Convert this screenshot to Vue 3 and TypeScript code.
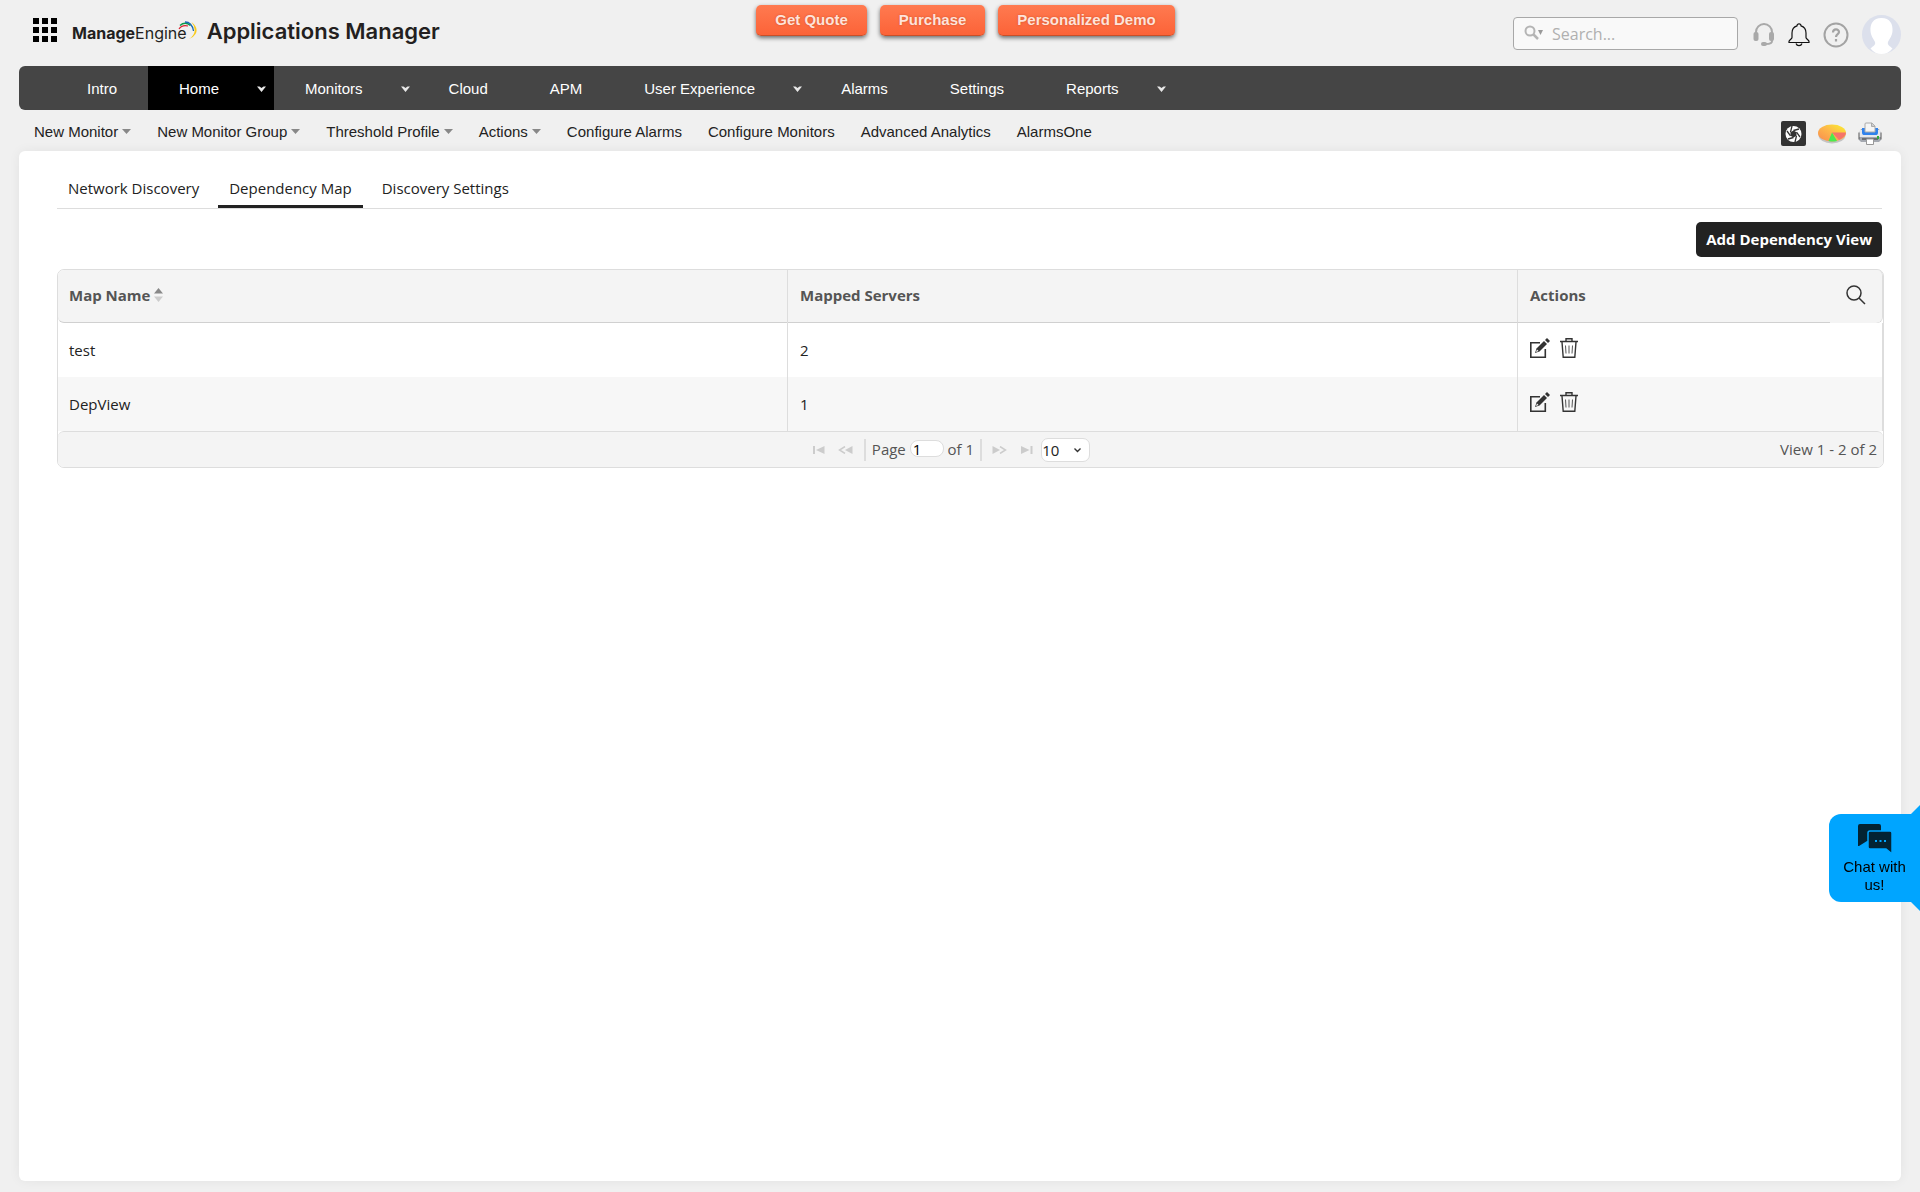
<script setup lang="ts">
import { ref } from 'vue'

interface NavItem { label: string; menu?: boolean; active?: boolean }

const promos: string[] = ['Get Quote', 'Purchase', 'Personalized Demo']
const nav: NavItem[] = [
  { label: 'Intro' },
  { label: 'Home', menu: true, active: true },
  { label: 'Monitors', menu: true },
  { label: 'Cloud' },
  { label: 'APM' },
  { label: 'User Experience', menu: true },
  { label: 'Alarms' },
  { label: 'Settings' },
  { label: 'Reports', menu: true },
]
const subnav: NavItem[] = [
  { label: 'New Monitor', menu: true },
  { label: 'New Monitor Group', menu: true },
  { label: 'Threshold Profile', menu: true },
  { label: 'Actions', menu: true },
  { label: 'Configure Alarms' },
  { label: 'Configure Monitors' },
  { label: 'Advanced Analytics' },
  { label: 'AlarmsOne' },
]
const tabs: string[] = ['Network Discovery', 'Dependency Map', 'Discovery Settings']
const activeTab = ref('Dependency Map')
const maps = [
  { name: 'test', servers: 2 },
  { name: 'DepView', servers: 1 },
]
const query = ref('')
const page = ref('1')
const pageSize = ref('10')
</script>

<template>
  <div class="app">
    <header class="top">
      <div class="brand">
        <button class="plain" aria-label="Applications">
          <svg width="25" height="25" viewBox="0 0 25 25">
            <template v-for="r in 3" :key="r">
              <rect v-for="c in 3" :key="c" :x="(c - 1) * 9" :y="(r - 1) * 9" width="6" height="6" fill="#000" />
            </template>
          </svg>
        </button>
        <a href="#" class="logo">
          <span class="maker"><b>Manage</b>Engine</span>
          <svg class="swoosh" width="20" height="20" viewBox="0 0 20 20" fill="none">
            <path d="M1 9Q4 4.500 10 6" stroke="#d9202e" stroke-width="1.200" />
            <path d="M2 5.500Q7 1 12.500 5.500" stroke="#0a9a4a" stroke-width="1.600" />
            <path d="M7 2Q14 2 15.500 11" stroke="#1668b3" stroke-width="1.300" />
            <path d="M13.500 2Q21 8 17.500 14Q15.500 17.500 11 19Q15.500 16 16.500 12Q17.500 7 13.500 2" fill="#f8cb1c" />
          </svg>
          <span class="product">Applications Manager</span>
        </a>
      </div>
      <div class="promos">
        <button v-for="p in promos" :key="p" class="promo">{{ p }}</button>
      </div>
      <div class="tools">
        <label class="search">
          <svg width="20" height="17" viewBox="0 0 20 17" fill="none">
            <circle cx="6" cy="6" r="4.500" stroke="#b5b5b5" stroke-width="2" />
            <path d="M9.500 9.500L14 14" stroke="#b5b5b5" stroke-width="2.500" />
            <path d="M14 5h5l-2.500 5z" fill="#999" />
          </svg>
          <input v-model="query" type="text" placeholder="Search..." aria-label="Search" />
        </label>
        <button class="plain" aria-label="Support">
          <svg width="22" height="24" viewBox="0 0 22 24" fill="none">
            <path d="M3 10V9a8 8 0 0 1 16 0v1M19 16v2q0 3-6 3" stroke="#a9a9a9" stroke-width="2" />
            <rect x="0.500" y="9" width="5" height="9" rx="2" fill="#a9a9a9" />
            <rect x="16" y="9" width="5" height="9" rx="2" fill="#a9a9a9" />
            <rect x="8" y="19" width="6" height="4" rx="2" fill="#a9a9a9" />
          </svg>
        </button>
        <button class="plain" aria-label="Notifications">
          <svg width="22" height="24" viewBox="0 0 22 24" fill="none" stroke="#111" stroke-width="1.200">
            <path d="M9 2.800a2 2 0 0 1 4 0c3.500 1 5 4 5 7.200v4.500c0 1.500 3 2.500 3 4v1H1v-1c0-1.500 3-2.500 3-4V10c0-3.200 1.500-6.200 5-7.200z" />
            <path d="M8 20.500c1 2.800 5 2.800 6 0" />
          </svg>
        </button>
        <button class="plain" aria-label="Help">
          <svg width="26" height="26" viewBox="0 0 26 26" fill="none" stroke="#a3a3a3">
            <circle cx="13" cy="13" r="11.500" stroke-width="2" />
            <path d="M10 10.500c0-4 6-4 6-.5 0 2.200-3 2-3 5M13 17v2.500" stroke-width="2.200" />
          </svg>
        </button>
        <button class="plain" aria-label="Account">
          <svg width="39" height="39" viewBox="0 0 39 39">
            <circle cx="19.500" cy="19.500" r="19.500" fill="#dce0ec" />
            <path d="M19.500 3C11 3 8 9 8.500 16c.4 5 2.500 7 4.500 11 1 3-2 4-4.500 6.500Q13 39 19.500 39t11-5.500C28 31 25 30 26 27c2-4 4.100-6 4.500-11C31 9 28 3 19.500 3z" fill="#fff" />
          </svg>
        </button>
      </div>
    </header>

    <nav class="nav">
      <a v-for="n in nav" :key="n.label" href="#" :class="{ active: n.active, menu: n.menu }">
        {{ n.label }}
        <svg v-if="n.menu" width="9" height="6" viewBox="0 0 9 6"><path d="M0 .5h2.500L4.500 2 6.500 .5H9L4.500 6z" fill="#e8e8e8" /></svg>
      </a>
    </nav>

    <div class="sub">
      <a v-for="s in subnav" :key="s.label" href="#">{{ s.label }}<svg v-if="s.menu" width="9" height="5" viewBox="0 0 9 5"><path d="M0 0h9L4.500 5z" fill="#888" /></svg></a>
      <div class="shortcuts">
        <button class="plain" aria-label="Snapshot">
          <svg width="25" height="25" viewBox="0 0 25 25">
            <rect width="25" height="25" rx="2" fill="#333" />
            <circle cx="12.500" cy="13" r="8" fill="#fff" />
            <path d="M12.500 9.500l3 1.700v3.600l-3 1.700-3-1.700v-3.600z" fill="#333" />
            <path d="M12.500 9.500L18 8M15.500 11.200L19 16M15.500 14.800L14 21M12.500 16.500L7 18M9.500 14.800L6 10M9.500 11.200L11 5" stroke="#333" stroke-width="1.300" />
          </svg>
        </button>
        <button class="plain" aria-label="Reports">
          <svg width="28" height="20" viewBox="0 0 28 20">
            <defs>
              <linearGradient id="pieFill" x1="0" y1="1" x2="1" y2="0">
                <stop offset="0" stop-color="#f98a4e" /><stop offset=".5" stop-color="#fdb64b" /><stop offset="1" stop-color="#fbf22e" />
              </linearGradient>
            </defs>
            <ellipse cx="14" cy="11" rx="13.500" ry="8.500" fill="#c4c4c4" />
            <ellipse cx="14" cy="9" rx="14" ry="8.500" fill="url(#pieFill)" />
            <path d="M14 8.500h14q0 4-7 7.500z" fill="#f5756a" />
            <path d="M14 8.500L10.500 17q4 1 8.500 0z" fill="#4bea4f" />
          </svg>
        </button>
        <button class="plain" aria-label="Print">
          <svg width="24" height="24" viewBox="0 0 24 24">
            <path d="M3 7h18l2 4v7l-2 2H3l-2-2v-7z" fill="#a4a8b0" />
            <path d="M2 8h3v5h14V8h3l1 3v4H1v-4z" fill="#e6e8ec" />
            <path d="M1 10.500v7M23 10.500v7" stroke="#555" />
            <path d="M4 6h3v4h10V6h3v5q0 2-2 2H6q-2 0-2-2z" fill="#2f82ee" />
            <path d="M7 2q0-1 1-1h6l3 3v6H7z" fill="#f5f5f5" stroke="#aaa" />
            <path d="M13.500 1v3.500H17" fill="#ccc" stroke="#aaa" />
            <path d="M4 16h16v2H4z" fill="#6c6f75" />
            <path d="M8.500 17h7v5.500h-7z" fill="#fff" stroke="#999" />
            <rect x="19" y="14" width="2" height="3" fill="#2fae3f" />
          </svg>
        </button>
      </div>
    </div>

    <main class="panel">
      <div class="tabs" role="tablist">
        <button v-for="t in tabs" :key="t" role="tab" :class="{ on: t === activeTab }" @click="activeTab = t">{{ t }}</button>
      </div>
      <div class="bar"><button class="add">Add Dependency View</button></div>

      <div class="grid">
        <table>
          <thead>
            <tr>
              <th>
                Map Name
                <svg width="9" height="14" viewBox="0 0 9 14"><path d="M0 5.500h9L4.500 0z" fill="#888" /><path d="M0 8.500h9L4.500 14z" fill="#ccc" /></svg>
              </th>
              <th>Mapped Servers</th>
              <th class="last">
                Actions
                <button class="find" aria-label="Search maps">
                  <svg width="20" height="20" viewBox="0 0 20 20" fill="none" stroke="#333" stroke-width="1.500"><circle cx="8" cy="8" r="7" /><path d="M13 13l6 6" /></svg>
                </button>
              </th>
            </tr>
          </thead>
          <tbody>
            <tr v-for="m in maps" :key="m.name">
              <td>{{ m.name }}</td>
              <td>{{ m.servers }}</td>
              <td>
                <div class="acts">
                  <button class="plain" :aria-label="'Edit ' + m.name">
                    <svg width="20" height="20" viewBox="0 0 20 20">
                      <path d="M10 4.700H.8v14.500h14.500V11" fill="none" stroke="#333" stroke-width="1.600" />
                      <path d="M5 15l1.500-4.500L14 3l3 3-7.500 7.500z" fill="#333" />
                      <path d="M15 2l2-2 3 3-2 2z" fill="#333" />
                      <path d="M6 14l1-2.500 1.500 1.500z" fill="#fff" />
                    </svg>
                  </button>
                  <button class="plain" :aria-label="'Delete ' + m.name">
                    <svg width="18" height="20" viewBox="0 0 18 20" fill="none" stroke="#333">
                      <path d="M0 3.500h18M6 3V.700h6V3" stroke-width="1.400" />
                      <path d="M2 4l1.200 15.200h11.600L16 4" stroke-width="1.400" />
                      <path d="M5.500 7.500l.5 8M9 7.500v8M12.500 7.500l-.5 8" stroke-width="1" stroke="#555" />
                    </svg>
                  </button>
                </div>
              </td>
            </tr>
          </tbody>
        </table>
        <div class="pager">
          <div class="controls">
            <button class="plain" aria-label="First page"><svg width="12" height="8" viewBox="0 0 12 8"><path d="M0 0h2v8H0zM11.500 0v8L3 4z" fill="#ccc" /></svg></button>
            <button class="plain prev" aria-label="Previous page"><svg width="15" height="8" viewBox="0 0 15 8"><path d="M14.500 0v8L7 4z" fill="#ccc" /><path d="M7 .5L1.500 4 7 7.500" fill="none" stroke="#ccc" stroke-width="1.500" /></svg></button>
            <i class="sep"></i>
            <label class="page">Page <input v-model="page" type="text" /> of 1</label>
            <i class="sep"></i>
            <button class="plain next" aria-label="Next page"><svg width="15" height="8" viewBox="0 0 15 8"><path d="M.5 0v8L8 4z" fill="#ccc" /><path d="M8 .5L13.500 4 8 7.500" fill="none" stroke="#ccc" stroke-width="1.500" /></svg></button>
            <button class="plain" aria-label="Last page"><svg width="12" height="8" viewBox="0 0 12 8"><path d="M9.500 0h2v8h-2zM0 0v8l8.500-4z" fill="#ccc" /></svg></button>
            <span class="size">
              <select v-model="pageSize" aria-label="Rows per page"><option>10</option><option>25</option><option>50</option></select>
              <svg width="7" height="5" viewBox="0 0 7 5" fill="none"><path d="M.5 .5l3 3 3-3" stroke="#333" stroke-width="1.400" /></svg>
            </span>
          </div>
          <div class="count">View 1 - 2 of 2</div>
        </div>
      </div>
    </main>

    <button class="chat">
      <svg width="34" height="30" viewBox="0 0 34 30">
        <path d="M2 0h19q2 0 2 2v15H9l-8 5H0V2q0-2 2-2z" fill="#032333" />
        <path d="M12 7h20q2 0 2 2v20h-1l-5-4H12q-2 0-2-2V9q0-2 2-2z" fill="#032333" stroke="#00a5ff" stroke-width="1.500" />
        <path d="M17 16h2v2h-2zM21.500 16h2v2h-2zM26 16h2v2h-2z" fill="#00a5ff" />
      </svg>
      <span>Chat with us!</span>
    </button>
  </div>
</template>

<style>
body {
  margin: 0;
  background: #f0f0f0;
}
</style>

<style scoped>
.app {
  box-sizing: border-box;
  min-height: 100vh;
  padding: 0 19px 11px;
  display: flex;
  flex-direction: column;
  font: 15px/20px "Open Sans", "Noto Sans", sans-serif;
  color: #222;
}
a {
  color: inherit;
  text-decoration: none;
}
button {
  font: inherit;
  color: inherit;
  cursor: pointer;
}
svg {
  display: block;
  flex: none;
}
.plain {
  padding: 0;
  border: 0;
  background: none;
}
.top {
  height: 66px;
  display: grid;
  grid-template-columns: 1fr auto 1fr;
  align-items: start;
}
.brand {
  display: flex;
  padding: 18px 0 0 14px;
  gap: 14px;
}
.logo {
  display: flex;
  height: 25px;
  color: #231f20;
  white-space: nowrap;
}
.maker {
  font: 16px/31px Inter, sans-serif;
}
.swoosh {
  margin: 2px 9px 0 -9px;
}
.product {
  font: 600 22px/26px Inter, sans-serif;
}
.promos {
  display: flex;
  gap: 13px;
  padding: 5px 0 0 11px;
}
.promo {
  height: 31px;
  padding: 0 19px;
  border: 0;
  border-bottom: 1px solid #c94f28;
  border-radius: 5px;
  background: linear-gradient(#ff7a50, #fc6338);
  box-shadow: 0 2px 4px rgba(0, 0, 0, 0.55);
  color: #ffe3da;
  font: bold 15px/20px "Liberation Sans", Arial, sans-serif;
  text-shadow: 0 0 2px rgba(150, 50, 20, 0.5);
}
.tools {
  display: flex;
  justify-content: flex-end;
  align-items: center;
  padding: 15px 0 0;
  gap: 13px;
}
.search {
  box-sizing: border-box;
  width: 225px;
  height: 33px;
  margin: 0 2px 2px 0;
  padding: 0 10px;
  display: flex;
  align-items: center;
  gap: 8px;
  border: 1px solid #a8a8a8;
  border-radius: 4px;
  background: #f9f9f9;
}
.search input {
  width: 100%;
  min-width: 0;
  padding: 0;
  border: 0;
  outline: 0;
  background: none;
  font: 16px/24px "Open Sans", sans-serif;
}
.search input::placeholder {
  color: #b0b0b0;
}
.nav {
  height: 44px;
  padding-left: 37px;
  display: flex;
  border-radius: 6px;
  background: #454545;
  color: #fff;
  font: 15px/38px "Liberation Sans", Arial, sans-serif;
}
.nav a {
  padding: 4px 31px 2px;
  display: flex;
  align-items: center;
  white-space: nowrap;
}
.nav .menu {
  padding-right: 8px;
  gap: 38px;
}
.nav .active {
  background: #000;
}
.sub {
  box-sizing: border-box;
  height: 41px;
  padding: 2px 19px 0 15px;
  display: flex;
  gap: 26px;
  font: 15px/39px "Liberation Sans", Arial, sans-serif;
}
.sub a {
  display: flex;
  align-items: center;
  gap: 4px;
  white-space: nowrap;
}
.shortcuts {
  margin-left: auto;
  padding-top: 4px;
  display: flex;
  align-items: center;
  gap: 12px;
}
.panel {
  flex: 1;
  padding: 20px 17px 40px 38px;
  border-radius: 6px;
  background: #fff;
  box-shadow: 0 0 12px rgba(0, 0, 0, 0.06);
}
.tabs {
  margin-right: 2px;
  display: flex;
  gap: 8px;
  border-bottom: 1px solid #ddd;
}
.tabs button {
  padding: 7px 11px;
  border: 0;
  border-bottom: 3px solid transparent;
  background: none;
}
.tabs .on {
  border-color: #222;
}
.bar {
  display: flex;
  justify-content: flex-end;
  padding: 13px 2px 12px 0;
}
.add {
  height: 35px;
  padding: 0 10px 2px;
  border: 0;
  border-radius: 5px;
  background: #222;
  color: #fff;
  font-weight: bold;
}
.grid {
  border: 1px solid #ddd;
  border-radius: 7px;
}
table {
  width: 100%;
  table-layout: fixed;
  border-collapse: separate;
  border-spacing: 0;
}
th,
td {
  box-sizing: border-box;
  width: 40%;
  height: 54px;
  padding: 0 11px;
  border-right: 1px solid #ddd;
  text-align: left;
}
th + th,
td + td {
  padding-left: 12px;
}
th {
  position: relative;
  height: 53px;
  padding-bottom: 2px;
  border-bottom: 1px solid #d0d0d0;
  background: #f4f4f4;
  color: #555;
}
th svg {
  display: inline-block;
  vertical-align: -1px;
}
th:first-child {
  border-radius: 6px 0 0 6px;
}
th.last {
  width: 20%;
  border-radius: 0 6px 6px 0;
}
tbody tr:nth-child(even) {
  background: #f7f7f7;
}
.find {
  position: absolute;
  inset: 0 0 -1px auto;
  width: 52px;
  padding: 0 16px;
  border: 0;
  border-radius: 0 6px 6px 0;
  background: #f4f4f4;
}
.acts {
  display: flex;
  gap: 10px;
  padding-bottom: 4px;
}
.pager {
  height: 35px;
  display: grid;
  grid-template-columns: 1fr auto 1fr;
  align-items: center;
  border-top: 1px solid #ddd;
  border-radius: 6px;
  background: #f4f4f4;
  color: #555;
}
.controls {
  grid-column: 2;
  margin-right: 38px;
  display: flex;
  align-items: center;
}
.prev {
  margin: 0 11px 0 13px;
}
.next {
  margin: 0 14px 0 10px;
}
.sep {
  width: 2px;
  height: 22px;
  background: #ddd;
}
.page {
  padding: 0 6px 2px;
}
.page input {
  box-sizing: border-box;
  width: 34px;
  height: 17px;
  padding: 0 2px;
  border: 1px solid #ddd;
  border-radius: 8px;
  background: #fff;
  color: #000;
  font: 15px/15px "Open Sans", sans-serif;
}
.size {
  position: relative;
  margin-left: 8px;
}
.size select {
  appearance: none;
  box-sizing: border-box;
  display: block;
  width: 49px;
  height: 24px;
  padding: 0;
  border: 1px solid #ddd;
  border-radius: 7px;
  background: #fff;
  color: #222;
  font: 15px/22px "Open Sans", sans-serif;
}
.size svg {
  position: absolute;
  top: 10px;
  right: 9px;
  pointer-events: none;
}
.count {
  justify-self: end;
  padding: 0 6px 2px 0;
}
.chat {
  position: fixed;
  top: 814px;
  right: 0;
  width: 91px;
  height: 88px;
  padding: 10px 14px 0;
  display: flex;
  flex-direction: column;
  align-items: center;
  gap: 4px;
  border: 0;
  border-radius: 12px 0 0 12px;
  background: #00a5ff;
  color: #000;
  font: 15px/18px "Liberation Sans", Arial, sans-serif;
}
.chat::before,
.chat::after {
  content: "";
  position: absolute;
  right: 0;
  border-right: 9px solid #00a5ff;
}
.chat::before {
  bottom: 100%;
  border-top: 9px solid transparent;
}
.chat::after {
  top: 100%;
  border-bottom: 9px solid transparent;
}
</style>
